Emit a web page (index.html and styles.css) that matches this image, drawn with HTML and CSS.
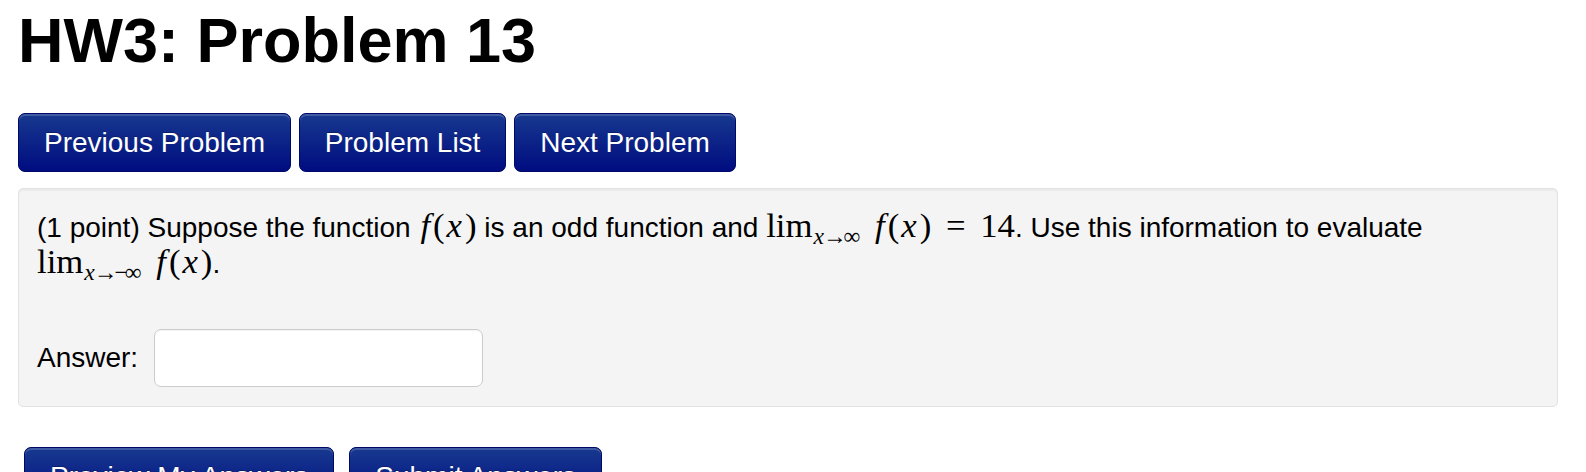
FILE: index.html
```html
<!DOCTYPE html>
<html lang="en">
<head>
  <meta charset="UTF-8" />
  <title>HW3: Problem 13</title>
  <link rel="stylesheet" href="styles.css">
</head>
<body>
  <h1 class="page-title">HW3: Problem 13</h1>

  <div class="nav-buttons">
    <a class="btn" href="#">Previous Problem</a>
    <a class="btn" href="#">Problem List</a>
    <a class="btn" href="#">Next Problem</a>
  </div>

  <div class="problem-well">
    <p class="problem-text">(1 point) Suppose the function <span class="math"><i>f</i>(<i>x</i>)</span> is an odd function and <span class="math">lim<sub><i>x</i>→∞</sub> <i>f</i>(<i>x</i>) <span class="op">=</span> 14</span>. Use this information to evaluate <span class="math">lim<sub><i>x</i>→−∞</sub> <i>f</i>(<i>x</i>)</span>.</p>

    <div class="answer-row">
      <label for="answer1">Answer:</label>
      <input class="answer-input" id="answer1" type="text">
    </div>
  </div>

  <div class="submit-buttons">
    <button class="btn">Preview My Answers</button>
    <button class="btn">Submit Answers</button>
  </div>
</body>
</html>
```

FILE: styles.css
```css
* {
  box-sizing: border-box;
}

body {
  margin: 0;
  padding: 0 18px;
  font-family: "Liberation Sans", Arial, sans-serif;
  font-size: 28px;
  color: #000;
  background-color: #fff;
}

.page-title {
  margin: 0;
  padding-top: 4px;
  font-size: 63px;
  font-weight: bold;
  line-height: 72px;
}

.nav-buttons {
  margin-top: 37px;
}

.btn {
  display: inline-block;
  padding: 12px 25px;
  font-family: "Liberation Sans", Arial, sans-serif;
  font-size: 28px;
  line-height: 33px;
  color: #fff;
  text-decoration: none;
  background-color: #00108a;
  background-image: linear-gradient(#17398f, #000c80);
  border: 1px solid #000a66;
  border-radius: 7px;
  box-shadow: inset 0 2px 0 rgba(255, 255, 255, 0.18);
  text-shadow: 0 -1px 0 rgba(0, 0, 0, 0.25);
  cursor: pointer;
}

.problem-well {
  margin: 16px 10px 0 0;
  padding: 21px 18px 19px;
  background-color: #f4f4f4;
  border: 1px solid #e2e2e2;
  border-radius: 5px;
  box-shadow: inset 0 2px 1px rgba(0, 0, 0, 0.04);
}

.problem-text {
  margin: 0;
  line-height: 36px;
}

.math {
  font-family: "Liberation Serif", "Times New Roman", serif;
  font-size: 1.24em;
  line-height: 0;
  white-space: nowrap;
}

.math i {
  padding: 0 3px 0 2px;
}

.math sub {
  font-size: 0.68em;
  vertical-align: -0.3em;
  line-height: 0;
  letter-spacing: -3px;
  margin-right: 7px;
}

.math sub i {
  padding: 0 2px 0 1px;
}

.math .op {
  padding: 0 6px;
}

.answer-row {
  display: flex;
  align-items: center;
  gap: 16px;
  margin-top: 47px;
}

.answer-input {
  width: 329px;
  height: 58px;
  padding: 6px 10px;
  font-size: 28px;
  background-color: #fff;
  border: 1px solid #cccccc;
  border-radius: 7px;
  box-shadow: inset 0 1px 1px rgba(0, 0, 0, 0.05);
}

.submit-buttons {
  display: flex;
  gap: 15px;
  margin-top: 40px;
  padding-left: 6px;
}
```
